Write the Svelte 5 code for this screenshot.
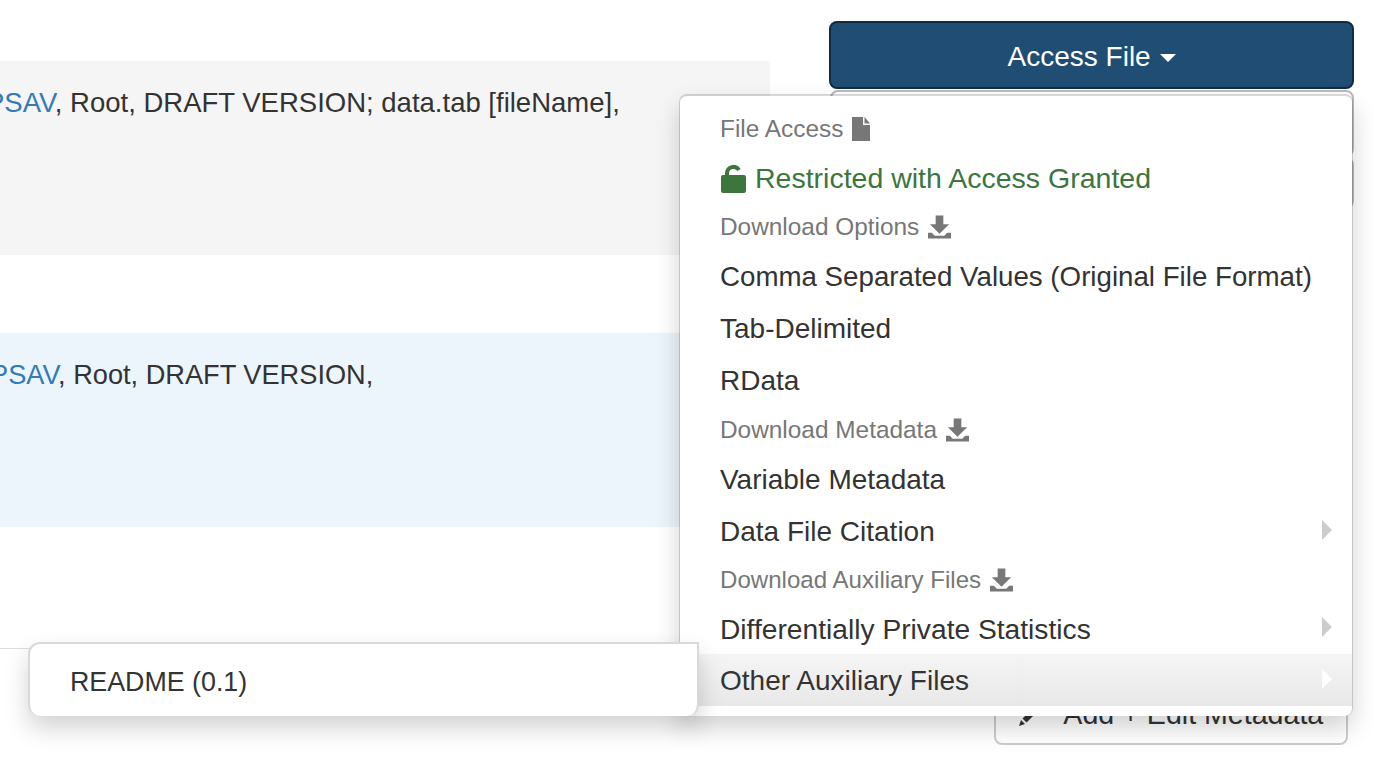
<script>
  const menu = [
    { type: "header", label: "File Access", icon: "file" },
    { type: "granted", label: "Restricted with Access Granted" },
    { type: "header", label: "Download Options", icon: "download" },
    { type: "item", label: "Comma Separated Values (Original File Format)" },
    { type: "item", label: "Tab-Delimited" },
    { type: "item", label: "RData" },
    { type: "header", label: "Download Metadata", icon: "download" },
    { type: "item", label: "Variable Metadata" },
    { type: "item", label: "Data File Citation", sub: true },
    { type: "header", label: "Download Auxiliary Files", icon: "download" },
    { type: "item", label: "Differentially Private Statistics", sub: true },
    { type: "item", label: "Other Auxiliary Files", sub: true, active: true },
  ];
</script>

<div class="page">
  <div class="content">
    <div class="rows">
      <div class="row citation">
        <a href="#top">PSAV</a>, Root, DRAFT VERSION; data.tab [fileName],
      </div>
      <div class="row highlight">
        <a href="#top">PSAV</a>, Root, DRAFT VERSION,
      </div>
      <div class="rule"></div>
    </div>

    <div class="actions">
      <button class="access">Access File <span class="caret"></span></button>
      <div class="ghost first"></div>
      <div class="ghost second"></div>
      <button class="edit">
        <svg class="pencil" viewBox="0 0 16 20" width="16" height="20">
          <path d="M0 19l2-6 4 4zM3.500 11.500l7-7 4 4-7 7z" fill="#333" />
        </svg>
        Add + Edit Metadata
      </button>
    </div>
  </div>

  <ul class="dropdown">
    {#each menu as entry}
      {#if entry.type === "header"}
        <li class="header">
          {entry.label}
          {#if entry.icon === "file"}
            <svg viewBox="0 0 18 24" width="18" height="24">
              <path d="M0 0h11v8h7v16H0z" fill="#777" />
              <path d="M12.500 0l5.500 6.500h-5.500z" fill="#777" />
            </svg>
          {:else}
            <svg viewBox="0 0 24 24" width="23" height="24">
              <path d="M8 0h8v9h6L12 19 2 9h6z" fill="#777" />
              <path d="M0 18h4l3 3h10l3-3h4v6H0z" fill="#777" />
            </svg>
          {/if}
        </li>
      {:else if entry.type === "granted"}
        <li class="granted">
          <svg viewBox="0 0 25 28" width="25" height="28">
            <path
              d="M2 10h21a2 2 0 0 1 2 2v14a2 2 0 0 1-2 2H2a2 2 0 0 1-2-2V12a2 2 0 0 1 2-2z"
              fill="#3c763d"
            />
            <path
              d="M6 11V8a6.500 6.500 0 0 1 12-3"
              fill="none"
              stroke="#3c763d"
              stroke-width="4"
            />
          </svg>
          {entry.label}
        </li>
      {:else}
        <li class="item" class:active={entry.active}>
          {entry.label}
          {#if entry.sub}<span class="arrow"></span>{/if}
        </li>
      {/if}
    {/each}
  </ul>

  <ul class="submenu">
    <li>README (0.1)</li>
  </ul>
</div>

<style>
  :global(body) {
    margin: 0;
    background: #fff;
  }

  .page {
    position: relative;
    height: 758px;
    overflow: hidden;
    font-family: "Liberation Sans", Arial, sans-serif;
    font-size: 27.5px;
    color: #333;
  }

  .content {
    display: flex;
    height: 100%;
  }

  .rows {
    width: 770px;
    padding-top: 61px;
    box-sizing: border-box;
    flex-shrink: 0;
  }

  .row {
    height: 194px;
    box-sizing: border-box;
    padding-top: 24px;
    line-height: 36px;
    white-space: nowrap;
    overflow: hidden;
  }

  .citation {
    background: #f5f5f5;
    margin-bottom: 78px;
    text-indent: -14px;
  }

  .highlight {
    background: #ecf5fb;
    font-size: 27.2px;
    text-indent: -10px;
  }

  .row a {
    color: #337ab7;
    text-decoration: none;
  }

  .rule {
    margin-top: 121px;
    height: 1px;
    width: 40px;
    background: #ddd;
  }

  .actions {
    flex: 1;
    padding: 21px 20px 0 0;
    display: flex;
    flex-direction: column;
    align-items: flex-end;
  }

  .access {
    width: 525px;
    height: 68px;
    flex-shrink: 0;
    background: #204d74;
    border: 2px solid #122b40;
    border-radius: 8px;
    color: #fff;
    font: inherit;
    font-size: 28px;
    padding: 3px 0 0 1px;
  }

  .caret {
    display: inline-block;
    margin-left: 2px;
    vertical-align: middle;
    border-top: 8px solid #fff;
    border-left: 8px solid transparent;
    border-right: 8px solid transparent;
  }

  .ghost {
    width: 524px;
    box-sizing: border-box;
    border: 2px solid #bbb;
    flex-shrink: 0;
    border-radius: 8px;
  }

  .ghost.first {
    height: 67px;
    margin-top: 1px;
  }

  .ghost.second {
    height: 52px;
  }

  .edit {
    margin: 470px 6px 0 0;
    width: 354px;
    height: 66px;
    flex-shrink: 0;
    box-sizing: border-box;
    background: #fff;
    border: 2px solid #ccc;
    border-radius: 8px;
    font: inherit;
    font-size: 28.6px;
    color: #333;
    padding: 4px 0 0 23px;
    text-align: left;
    white-space: nowrap;
  }

  .pencil {
    margin-right: 22px;
    vertical-align: -3px;
  }

  ul {
    list-style: none;
    margin: 0;
    padding: 0;
  }

  .dropdown {
    position: absolute;
    left: 679px;
    top: 94px;
    width: 674px;
    box-sizing: border-box;
    padding: 8px 0 10px;
    font-size: 28px;
    background: #fff;
    background-clip: padding-box;
    border: 1px solid rgba(0, 0, 0, 0.15);
    border-top-width: 2px;
    border-bottom: 0;
    border-radius: 8px;
    box-shadow: 0 12px 24px rgba(0, 0, 0, 0.175);
  }

  .header {
    display: flex;
    align-items: center;
    gap: 9px;
    height: 47px;
    padding-left: 40px;
    font-size: 24.4px;
    color: #777;
  }

  .header:first-child {
    height: 46px;
    padding-top: 2px;
  }

  .header:nth-child(10) {
    height: 45px;
    font-size: 24.1px;
  }

  .granted {
    display: flex;
    align-items: center;
    gap: 9px;
    height: 49px;
    padding-top: 2px;
    padding-left: 41px;
    font-size: 28.5px;
    color: #3c763d;
  }

  .item {
    position: relative;
    height: 52px;
    line-height: 54px;
    padding-left: 40px;
    white-space: nowrap;
  }

  .item:nth-child(4) {
    font-size: 27.7px;
  }

  .item:nth-child(11) {
    font-size: 28.2px;
  }

  .item.active {
    background: linear-gradient(to bottom, #f5f5f5, #e8e8e8);
  }

  .arrow {
    position: absolute;
    right: 20px;
    top: 15px;
    border-left: 10px solid #ccc;
    border-top: 10px solid transparent;
    border-bottom: 10px solid transparent;
  }

  .item.active .arrow {
    border-left-color: #fff;
  }

  .submenu {
    position: absolute;
    left: 28px;
    top: 642px;
    width: 671px;
    height: 74px;
    box-sizing: border-box;
    padding-left: 40px;
    font-size: 26.8px;
    line-height: 76px;
    background: #fff;
    border: 2px solid #d9d9d9;
    border-bottom: 0;
    border-radius: 12px 0 12px 12px;
    box-shadow: 0 12px 24px rgba(0, 0, 0, 0.175);
  }
</style>
